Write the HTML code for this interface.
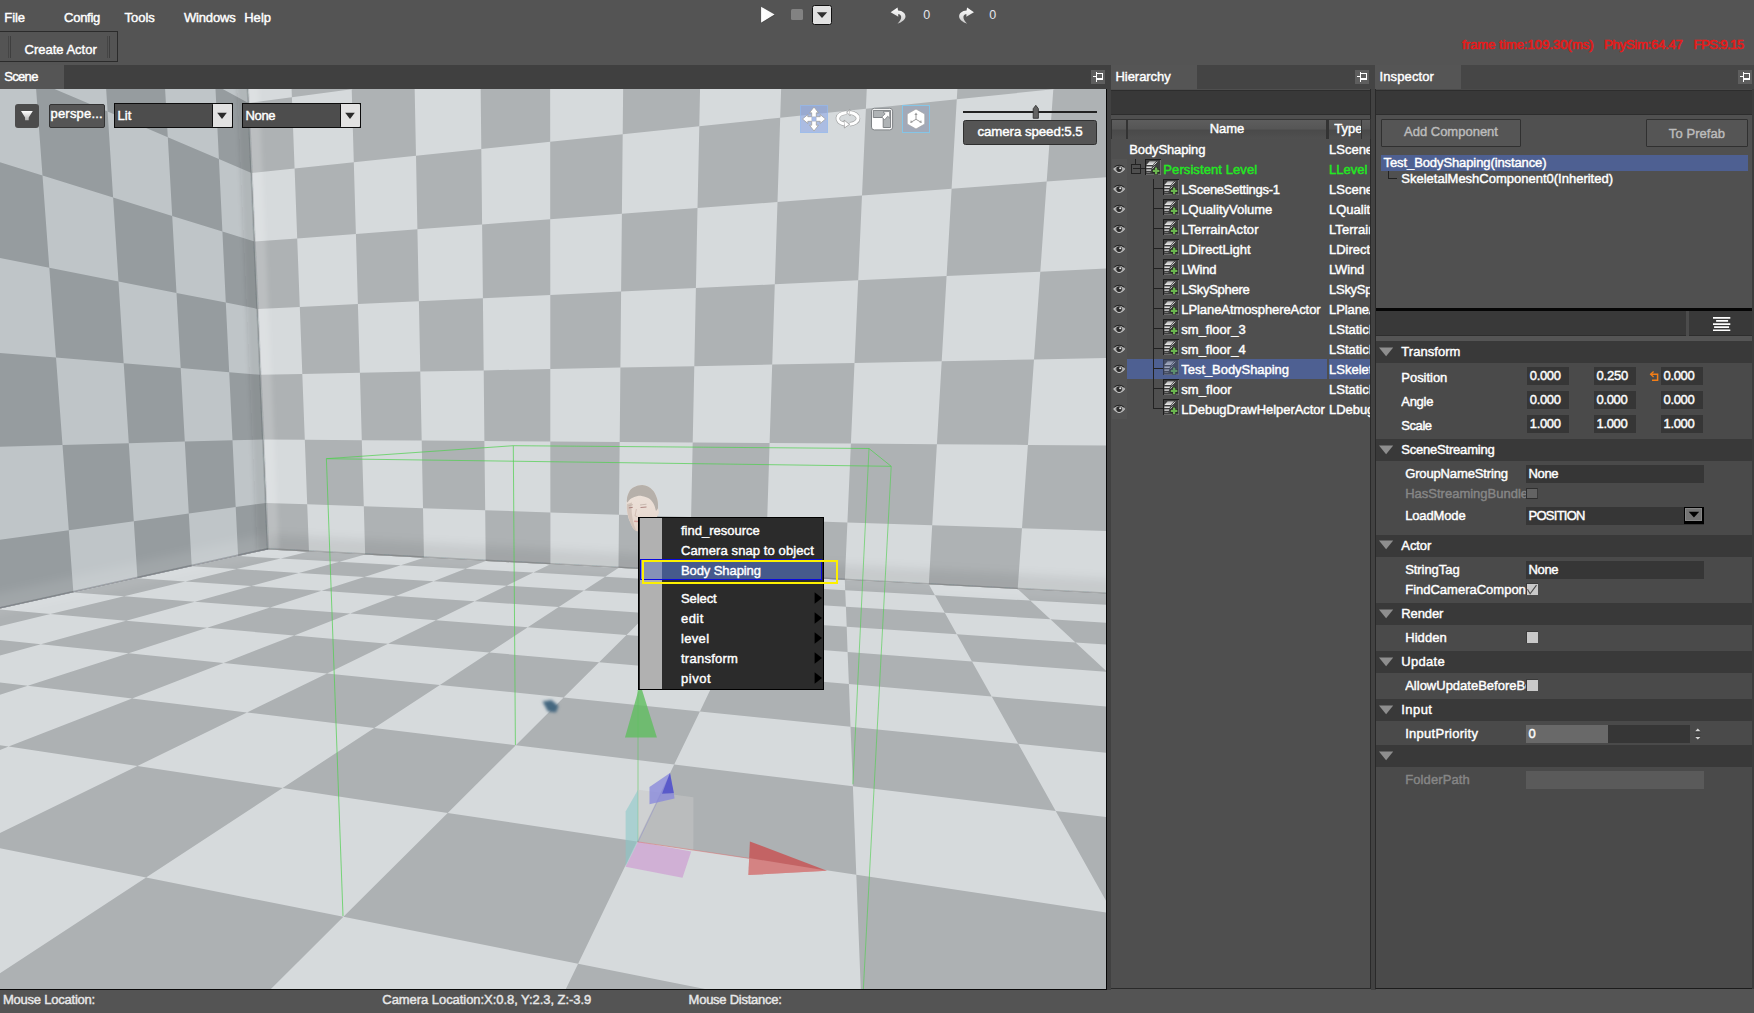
<!DOCTYPE html><html><head><meta charset="utf-8"><title>Editor</title><style>
*{box-sizing:border-box;margin:0;padding:0}
html,body{width:1754px;height:1013px;overflow:hidden;background:#545454}
body{font-family:"Liberation Sans", sans-serif;font-size:13px;position:relative;color:#fff}
div,svg{position:absolute}
.t{white-space:pre;-webkit-text-stroke:0.42px currentColor}
.g{white-space:pre;-webkit-text-stroke:0.3px currentColor}
</style></head><body>
<div class="t" style="left:4.3px;top:7.5px;line-height:20px;height:20px;color:#fff;letter-spacing:-0.11px;">File</div>
<div class="t" style="left:64.1px;top:7.5px;line-height:20px;height:20px;color:#fff;letter-spacing:-0.28px;">Config</div>
<div class="t" style="left:124.5px;top:7.5px;line-height:20px;height:20px;color:#fff;">Tools</div>
<div class="t" style="left:183.9px;top:7.5px;line-height:20px;height:20px;color:#fff;letter-spacing:-0.14px;">Windows</div>
<div class="t" style="left:244.2px;top:7.5px;line-height:20px;height:20px;color:#fff;letter-spacing:0.04px;">Help</div>
<div style="left:-1px;top:31px;width:119px;height:31px;border:1px solid #2b2b2b;"></div>
<div style="left:8px;top:36px;width:1px;height:22px;background:#454545;"></div>
<div style="left:10.4px;top:36px;width:1px;height:22px;background:#3e3e3e;"></div>
<div style="left:107px;top:36px;width:1px;height:22px;background:#454545;"></div>
<div style="left:109.4px;top:36px;width:1px;height:22px;background:#3e3e3e;"></div>
<div class="t" style="left:24.5px;top:39.5px;line-height:20px;height:20px;color:#fff;">Create Actor</div>
<svg style="left:758px;top:4px;" width="20" height="22" viewBox="0 0 20 22"><defs><linearGradient id="gp" x1="0" y1="0" x2="1" y2="0"><stop offset="0" stop-color="#fff"/><stop offset="1" stop-color="#f4f4f4"/></linearGradient></defs><path d="M3.1,2.8L3.1,18.8L16.6,10.6Z" fill="url(#gp)"/><path d="M3.1,18.8L16.6,10.6L16.6,11.4L3.1,19.6Z" fill="#3a3a3a" opacity=".5"/></svg>
<div style="left:791px;top:9px;width:12px;height:11px;background:#828282;border-radius:1.5px"></div>
<div style="left:812px;top:5px;width:19.5px;height:19.5px;background:#e1e1e1;border:1px solid #111;border-radius:2.5px"></div><svg style="left:812px;top:5px;" width="20" height="20" viewBox="0 0 20 20"><path d="M4.8,7.2L15.2,7.2L10,13Z" fill="#2e2e2e"/></svg>
<svg style="left:889.6px;top:6.6px;" width="18" height="18" viewBox="0 0 18 18"><defs><linearGradient id="gu" x1="0" y1="0" x2="0" y2="1"><stop offset="0" stop-color="#fff"/><stop offset="1" stop-color="#c8c8c8"/></linearGradient></defs><path d="M0.66,5.25L7.54,0.52L8.00,3.41C12.59,3.61 15.61,6.23 15.48,9.51C15.34,12.59 11.80,15.21 7.54,16.72C9.97,14.10 11.54,11.80 11.15,9.51C10.75,7.74 9.70,7.21 8.07,7.21L8.33,9.70Z" fill="url(#gu)"/></svg>
<svg style="left:957.6px;top:6.6px;" width="18" height="18" viewBox="0 0 18 18"><g transform="translate(16.6,0) scale(-1,1)"><path d="M0.66,5.25L7.54,0.52L8.00,3.41C12.59,3.61 15.61,6.23 15.48,9.51C15.34,12.59 11.80,15.21 7.54,16.72C9.97,14.10 11.54,11.80 11.15,9.51C10.75,7.74 9.70,7.21 8.07,7.21L8.33,9.70Z" fill="url(#gu)"/></g></svg>
<div class="t" style="left:923.2px;top:4.5px;line-height:20px;height:20px;color:#e6e6ee;font-size:12.5px;-webkit-text-stroke:0;">0</div>
<div class="t" style="left:989.3px;top:4.5px;line-height:20px;height:20px;color:#e6e6ee;font-size:12.5px;-webkit-text-stroke:0;">0</div>
<div class="t" style="left:1461.9px;top:34.5px;line-height:20px;height:20px;color:#e61e1e;letter-spacing:0.04px;text-shadow:0.6px 0 0 #c01818;">frame time:109.30(ms)</div>
<div class="t" style="left:1603.9px;top:34.5px;line-height:20px;height:20px;color:#e61e1e;letter-spacing:-0.19px;text-shadow:0.6px 0 0 #c01818;">PhySim:64.47</div>
<div class="t" style="left:1693.5px;top:34.5px;line-height:20px;height:20px;color:#e61e1e;letter-spacing:-0.53px;text-shadow:0.6px 0 0 #c01818;">FPS:9.15</div>
<div style="left:0px;top:65px;width:1111px;height:24px;background:#404040;"></div>
<div style="left:0px;top:65px;width:64px;height:24px;background:#555;"></div>
<div class="t" style="left:4.3px;top:66.5px;line-height:20px;height:20px;color:#fff;letter-spacing:-0.70px;">Scene</div>
<div style="left:1111px;top:65px;width:264px;height:24px;background:#444;"></div>
<div style="left:1111px;top:65px;width:86px;height:24px;background:#555;"></div>
<div class="t" style="left:1115.5px;top:66.5px;line-height:20px;height:20px;color:#fff;letter-spacing:-0.05px;">Hierarchy</div>
<div style="left:1375px;top:65px;width:379px;height:24px;background:#464646;"></div>
<div style="left:1375px;top:65px;width:86px;height:24px;background:#555;"></div>
<div class="t" style="left:1379.5px;top:66.5px;line-height:20px;height:20px;color:#fff;letter-spacing:0.12px;">Inspector</div>
<svg style="left:1091px;top:70px;" width="14" height="14" viewBox="0 0 14 14"><rect width="14" height="14" fill="#5e5e5e"/><path d="M5,2h1v10h-1zM2,6h3v1h-3zM6,3h6v1h-6zM11,4h1v4h-1zM6,8h6v2h-6z" fill="#fff"/></svg>
<svg style="left:1355px;top:70px;" width="14" height="14" viewBox="0 0 14 14"><rect width="14" height="14" fill="#5e5e5e"/><path d="M5,2h1v10h-1zM2,6h3v1h-3zM6,3h6v1h-6zM11,4h1v4h-1zM6,8h6v2h-6z" fill="#fff"/></svg>
<svg style="left:1738px;top:70px;" width="14" height="14" viewBox="0 0 14 14"><rect width="14" height="14" fill="#5e5e5e"/><path d="M5,2h1v10h-1zM2,6h3v1h-3zM6,3h6v1h-6zM11,4h1v4h-1zM6,8h6v2h-6z" fill="#fff"/></svg>
<svg width="1106" height="900" viewBox="0 89 1106 900" style="position:absolute;left:0;top:89px;display:block">
<defs>
<clipPath id="cb"><path d="M246.9,67.5L1224.1,-78.2L1161,596.6L268,549.4Z"/></clipPath>
<clipPath id="cl"><path d="M-131.6,-274.7L246.9,67.5L268,549.4L-48.2,619.2Z"/></clipPath>
<clipPath id="cf"><path d="M268,549.4L1161,596.6L1200,1100L-100,1100L-48.2,619.2Z"/></clipPath>
<filter id="b6" filterUnits="userSpaceOnUse" x="-100" y="0" width="1400" height="1200"><feGaussianBlur stdDeviation="5"/></filter><filter id="b2" filterUnits="userSpaceOnUse" x="-100" y="0" width="1400" height="1200"><feGaussianBlur stdDeviation="2"/></filter><filter id="b1" filterUnits="userSpaceOnUse" x="-100" y="0" width="1400" height="1200"><feGaussianBlur stdDeviation=".7"/></filter>
</defs>
<g clip-path="url(#cf)"><rect x="0" y="89" width="1106" height="900" fill="#d6dadc"/>
<path fill="#adb1b3" d="M238.1,556L280.7,558.4L236.7,569L191.7,566.3ZM137.5,578.2L185.3,581.5L124.1,596.3L73.4,592.4ZM-3.6,609.3L50.4,614.1L-40.3,636L-97.9,630.1ZM309,551.6L365.2,554.6L339.3,561.7L280.7,558.4ZM236.7,569L298.9,572.9L251.4,586L185.3,581.5ZM124.1,596.3L194.8,601.7L126.1,620.7L50.4,614.1ZM-40.3,636L40.9,644.3L-67.4,674.2L-154.5,663.6ZM339.3,561.7L400.8,565.2L364.4,576.9L298.9,572.9ZM251.4,586L321.5,590.8L270,607.5L194.8,601.7ZM126.1,620.7L207.1,627.8L128.6,653.2L40.9,644.3ZM-67.4,674.2L27.8,685.8L-106.4,729.2L-209.7,713.6ZM424,557.7L485.7,560.9L465.4,568.8L400.8,565.2ZM364.4,576.9L433.6,581.2L395.8,595.9L321.5,590.8ZM270,607.5L350.2,613.6L294.2,635.4L207.1,627.8ZM128.6,653.2L223.6,662.9L132.1,698.5L27.8,685.8ZM-106.4,729.2L8.6,746.6L-167.3,815L-293.7,789.8ZM465.4,568.8L533.4,572.6L506.7,585.7L433.6,581.2ZM395.8,595.9L474.7,601.3L436,620.2L350.2,613.6ZM294.2,635.4L388,643.7L327,673.4L223.6,662.9ZM132.1,698.5L247,712.5L137.4,766L8.6,746.6ZM-167.3,815L-22.2,843.9L-275.6,967.7L-437.7,920.2ZM550.4,564.3L618.4,567.9L605.1,576.7L533.4,572.6ZM506.7,585.7L584,590.5L558.7,607.1L474.7,601.3ZM436,620.2L527.8,627.3L489.3,652.5L388,643.7ZM327,673.4L439.9,684.9L374.2,728L247,712.5ZM137.4,766L282.6,788L146.1,877.5L-22.2,843.9ZM605.1,576.7L680.7,580.9L666,595.6L584,590.5ZM558.7,607.1L648.3,613.2L626.5,634.9L527.8,627.3ZM489.3,652.5L599.1,662.2L563.6,697.5L439.9,684.9ZM374.2,728L515.8,745.2L447.7,812.9L282.6,788ZM146.1,877.5L343.4,916.8L163.1,1096.4L-79.4,1025.2ZM690,571.7L765.3,575.7L760.7,585.4L680.7,580.9ZM666,595.6L753.2,600.9L744.1,619.8L648.3,613.2ZM626.5,634.9L732.8,643.1L718.6,672.6L599.1,662.2ZM563.6,697.5L699.9,711.4L674.2,764.5L515.8,745.2ZM447.7,812.9L637,841.6L578.1,963.7L343.4,916.8ZM760.7,585.4L845.2,590.2L845.9,606.7L753.2,600.9ZM744.1,619.8L846.7,626.8L847.6,651.9L732.8,643.1ZM718.6,672.6L848.9,684.1L850.5,726.8L699.9,711.4ZM674.2,764.5L852.9,786.2L856.3,874.7L637,841.6ZM578.1,963.7L862,1020.3L873,1304.5L470.6,1186.5ZM844.8,579.9L928.8,584.3L934.9,595.2L845.2,590.2ZM845.9,606.7L944.8,612.8L956.8,634.3L846.7,626.8ZM847.6,651.9L972,661.5L991.7,696.6L848.9,684.1ZM850.5,726.8L1018.2,743.8L1055.7,810.9L852.9,786.2ZM856.3,874.7L1113.2,913.5L1212.1,1090.1L862,1020.3ZM934.9,595.2L1030.2,600.6L1050.4,619.3L944.8,612.8ZM956.8,634.3L1075.5,642.5L1107.2,671.9L972,661.5ZM991.7,696.6L1148.8,710.3L1205.7,763L1018.2,743.8ZM1055.7,810.9L1288.2,839.2L1418.4,959.7L1113.2,913.5ZM1017.7,589L1111.8,594L1131.5,606.3L1030.2,600.6ZM1050.4,619.3L1163.6,626.3L1203.5,651.2L1075.5,642.5ZM1107.2,671.9L1254.7,683.2L1322.6,725.6L1148.8,710.3ZM1131.5,606.3L1239.5,612.4L1285.1,633.8L1163.6,626.3Z"/>
<path d="M268,549.4L1161,596.6M268,549.4L-48.2,619.2" stroke="#fff" stroke-opacity=".05" stroke-width="14" fill="none" filter="url(#b2)"/>
</g>
<g clip-path="url(#cb)"><rect x="0" y="89" width="1106" height="900" fill="#d6dadc"/>
<path fill="#aeb2b4" d="M248.4,103L291.9,97.2L294.6,168.5L251.5,173ZM254.5,241.6L297.2,238.4L299.8,306.9L257.5,308.9ZM260.4,374.8L302.3,374L304.8,439.8L263.2,439.5ZM266,502.9L307.2,504.3L309.6,567.6L268.7,565.1ZM289.1,24.4L349.5,14.5L351.7,89.2L291.9,97.2ZM294.6,168.5L353.8,162.3L355.9,233.9L297.2,238.4ZM299.8,306.9L357.9,304.1L359.9,372.8L302.3,374ZM304.8,439.8L361.8,440.2L363.8,506.2L307.2,504.3ZM351.7,89.2L414.5,80.8L416,155.8L353.8,162.3ZM355.9,233.9L417.4,229.3L418.9,301.2L357.9,304.1ZM359.9,372.8L420.3,371.6L421.7,440.6L361.8,440.2ZM363.8,506.2L423,508.2L424.3,574.4L365.6,570.9ZM412.9,4.1L479.7,-6.9L480.5,71.9L414.5,80.8ZM416,155.8L481.3,149L482.1,224.4L417.4,229.3ZM418.9,301.2L482.9,298.2L483.7,370.4L420.3,371.6ZM421.7,440.6L484.4,441L485.2,510.2L423,508.2ZM480.5,71.9L550.1,62.6L550.2,141.8L481.3,149ZM482.1,224.4L550.2,219.2L550.3,295L482.9,298.2ZM483.7,370.4L550.3,369L550.3,441.5L484.4,441ZM485.2,510.2L550.4,512.4L550.4,581.8L485.9,578ZM550.1,-18.4L624.3,-30.6L623.5,52.8L550.1,62.6ZM550.2,141.8L622.7,134.2L621.9,213.8L550.2,219.2ZM550.3,295L621.1,291.6L620.4,367.6L550.3,369ZM550.3,441.5L619.7,442L619,514.7L550.4,512.4ZM623.5,52.8L701,42.4L699.3,126.2L622.7,134.2ZM621.9,213.8L697.5,208.1L695.9,288L621.1,291.6ZM620.4,367.6L694.3,366.2L692.7,442.5L619.7,442ZM619,514.7L691.1,517.1L689.6,590.1L618.3,585.9ZM702.8,-43.5L785.8,-57.2L783,31.4L701,42.4ZM699.3,126.2L780.2,117.7L777.5,202L697.5,208.1ZM695.9,288L774.8,284.3L772.2,364.6L694.3,366.2ZM692.7,442.5L769.6,443L767.2,519.7L691.1,517.1ZM783,31.4L869.8,19.7L865.9,108.8L780.2,117.7ZM777.5,202L862,195.6L858.2,280.3L774.8,284.3ZM772.2,364.6L854.5,363L850.9,443.6L769.6,443ZM767.2,519.7L847.4,522.4L844,599.3L764.7,594.6ZM865.9,108.8L956.8,99.3L951.6,188.8L862,195.6ZM858.2,280.3L946.6,276.1L941.7,361.2L854.5,363ZM850.9,443.6L936.9,444.2L932.2,525.2L847.4,522.4ZM962,7.4L1060.1,-5.8L1053.3,89.2L956.8,99.3ZM951.6,188.8L1046.7,181.6L1040.3,271.7L946.6,276.1ZM941.7,361.2L1034,359.4L1027.9,444.9L936.9,444.2ZM932.2,525.2L1022,528.2L1016.2,609.5L927.7,604.2ZM1053.3,89.2L1156.1,78.4L1147.9,174L1046.7,181.6ZM1040.3,271.7L1139.9,266.9L1132.1,357.4L1034,359.4ZM1027.9,444.9L1124.6,445.5L1117.2,531.4L1022,528.2ZM1164.5,-19.8L1276,-34.7L1265.7,67L1156.1,78.4ZM1147.9,174L1255.7,165.8L1246,261.9L1139.9,266.9ZM1132.1,357.4L1236.5,355.3L1227.3,446.3L1124.6,445.5ZM1117.2,531.4L1218.3,534.8L1209.6,620.9L1110,615Z"/>
<path d="M268,549.4L1161,596.6" stroke="#20282c" stroke-opacity=".07" stroke-width="30" fill="none" filter="url(#b6)"/>
<path d="M268,549.4L1161,596.6" stroke="#20282c" stroke-opacity=".20" stroke-width="2.600" fill="none" filter="url(#b1)"/>
<path d="M246.9,67.5L268,549.4" stroke="#fff" stroke-opacity=".16" stroke-width="22" fill="none" filter="url(#b2)"/>
</g>
<g clip-path="url(#cl)"><rect x="0" y="89" width="1106" height="900" fill="#bfc5c8"/>
<path fill="#969c9f" d="M242.1,-41.3L207.9,-67.9L211.6,9.4L245.3,31.6ZM248.4,103L215.3,85L218.9,159.1L251.5,173ZM254.5,241.6L222.4,231.6L225.8,302.6L257.5,308.9ZM260.4,374.8L229.2,372.2L232.5,440.3L263.2,439.5ZM266,502.9L235.7,507.1L238.9,572.5L268.7,565.1ZM211.6,9.4L158.7,-25.5L163.3,56.8L215.3,85ZM218.9,159.1L167.8,137.3L172.2,216L222.4,231.6ZM225.8,302.6L176.5,292.9L180.7,368.1L229.2,372.2ZM232.5,440.3L184.8,441.6L188.8,513.6L235.7,507.1ZM163.3,56.8L101.9,23.5L107.6,111.6L167.8,137.3ZM172.2,216L113.1,197.6L118.5,281.4L176.5,292.9ZM180.7,368.1L123.7,363.3L128.8,443.2L184.8,441.6ZM188.8,513.6L133.8,521.2L138.7,597.4L192.7,584ZM107.6,111.6L35.5,80.9L42.5,175.6L113.1,197.6ZM118.5,281.4L49.3,267.8L56,357.6L123.7,363.3ZM128.8,443.2L62.5,445L68.8,530.2L133.8,521.2ZM28.3,-16.5L-61.8,-65.4L-52.4,43.4L35.5,80.9ZM42.5,175.6L-43.3,148.9L-34.5,251.3L49.3,267.8ZM56,357.6L-25.9,350.7L-17.6,447.2L62.5,445ZM68.8,530.2L-9.5,541.1L-1.6,632.3L74.9,613.3ZM-52.4,43.4L-161.9,-3.3L-149.9,115.7L-43.3,148.9ZM-34.5,251.3L-138.2,230.8L-127,342.2L-25.9,350.7ZM-17.6,447.2L-116.1,450L-105.5,554.4L-9.5,541.1Z"/>
<path d="M268,549.4L-48.2,619.2" stroke="#fff" stroke-opacity=".10" stroke-width="30" fill="none" filter="url(#b6)"/>
<path d="M268,549.4L-48.2,619.2" stroke="#20282c" stroke-opacity=".25" stroke-width="3" fill="none" filter="url(#b1)"/>
<path d="M246.9,67.5L268,549.4" stroke="#24282a" stroke-opacity=".10" stroke-width="22" fill="none" filter="url(#b2)"/>
</g>
<path d="M246.9,67.5L268,549.4" stroke="#30383c" stroke-opacity=".16" stroke-width="2.400" fill="none" filter="url(#b1)"/>
<g stroke="#4fcf4f" stroke-width=".9" fill="none" stroke-opacity=".8"><path d="M326.4,458.7L513.3,445.7L869,448.5L891.2,466.3L326.4,458.7"/><path d="M326.4,458.7L343,916"/><path d="M513.3,445.7L515.4,745"/><path d="M869,448.5L852.900,784.300" stroke-opacity=".7"/><path d="M891.2,466.3L863.200,992" stroke-opacity=".7"/></g><defs><filter id="bl1" x="-50%" y="-50%" width="200%" height="200%"><feGaussianBlur stdDeviation="1.700"/></filter><filter id="bl2" x="-50%" y="-50%" width="200%" height="200%"><feGaussianBlur stdDeviation=".45"/></filter><linearGradient id="hd" x1="0" y1="0" x2="0" y2="1"><stop offset="0" stop-color="#ece2da"/><stop offset=".6" stop-color="#eadcd3"/><stop offset="1" stop-color="#e0cfc5"/></linearGradient></defs><path d="M542.500,701.500l9,-1.500l7,6l-2.500,6.500l-8,-1z" fill="#456880" filter="url(#bl1)"/><g filter="url(#bl2)"><path d="M642.200,484.900C636,485 631.500,488 629.700,490.700C627.800,494 627,497 627,499C626.500,502 626.400,504 626.600,505.900C626.400,509 626.900,512 627.600,514.200C628.200,518 629.200,520.500 630.400,522.500C631.600,526 633,528.500 634.600,530.100C636,531.200 637.500,531.600 639,531.400L645,531L655.300,520L657.600,515.500C658.800,514 659,512.500 658.700,511.500C658.600,510 658.300,509 658,508C658.200,504 657.800,500.500 656.700,497.600C655.800,494.500 654.500,492 652.500,490C650,487 646.500,485 642.200,484.900Z" fill="url(#hd)"/><path d="M642.200,484.900C636,485 631.500,488 629.700,490.700C627.800,494 627,497 627,499C626.600,501 626.700,502 627.600,502.500C629,500 631,498.500 633.200,497.600C636,496.200 639,495.700 641.500,495.900C645,496.300 648,497.500 649.800,499C652,501 653.600,503.500 654.600,505.900C655.200,508 655.600,509.500 656,511C657,510 657.800,509 658,508C658.200,504 657.800,500.500 656.700,497.600C655.800,494.500 654.500,492 652.500,490C650,487 646.500,485 642.200,484.900Z" fill="#b6b0aa"/><path d="M627,504C626.500,509 627.500,516 630.400,522.500C631.600,526 633,528.500 634.600,530.100L636.500,531.300C634.500,527 633,522 632.300,517C631.500,512 631.300,507 632,502.500Z" fill="#cdbdb3" opacity=".8"/><path d="M628.800,507.900l4,-.6M640.500,507.500l6,-.5" stroke="#9a6a66" stroke-width="1" opacity=".75"/><path d="M628.500,505.600l4.500,-.9M640,505l6.500,-.8" stroke="#b4a49a" stroke-width=".8" opacity=".8"/><path d="M634.200,521.200l4,.3" stroke="#d09490" stroke-width="1.400" opacity=".85"/><path d="M636.400,509l-1.400,7l2.200,.6" stroke="#cdb8ad" stroke-width=".8" fill="none"/></g><path d="M638,690V842" stroke="#58c858" stroke-width="1" stroke-opacity=".55"/><path d="M640.2,684L625,737.600H656.900Z" fill="#5fbe5f" fill-opacity=".8"/><path d="M638,789.700L693.400,797.300V850.500L638,841.800Z" fill="#c8c8c8" fill-opacity=".5"/><path d="M638,789.700L625.600,811.400V866.800L638,841.800Z" fill="#86c8c8" fill-opacity=".55"/><path d="M638,841.800L691.200,851.600L682.500,877.700L625.600,866.800Z" fill="#cfa8d4" fill-opacity=".85"/><path d="M670,775L638,842" stroke="#7070d8" stroke-width="1" stroke-opacity=".3"/><path d="M637.300,841.800L749.500,858.400" stroke="#e06060" stroke-width="1" stroke-opacity=".45"/><path d="M670,773L649.500,786.900V804.200L674.500,798.400L673.800,793Z" fill="#8686dc" fill-opacity=".75"/><path d="M670,773L662,793.800L673.800,793Z" fill="#4c4cc8" fill-opacity=".8"/><path d="M749.900,841.400L827,870.700L748.400,875Z" fill="#c85050" fill-opacity=".8"/><path d="M749.200,858L827,870.700L748.400,875Z" fill="#e0a0a0" fill-opacity=".45"/>
</svg>
<div style="left:1106px;top:89px;width:1px;height:900.5px;background:#060606;"></div>
<div style="left:1107px;top:89px;width:4px;height:900.5px;background:#414141;"></div>
<div style="left:0px;top:988.7px;width:1107px;height:1px;background:#0a0a0a;"></div>
<div style="left:15.2px;top:104px;width:24px;height:24px;background:#4c4c4c;border-radius:3px"></div><svg style="left:15.2px;top:104px;" width="24" height="24" viewBox="0 0 24 24"><defs><linearGradient id="gf" x1="0" y1="0" x2="0" y2="1"><stop offset="0" stop-color="#fff"/><stop offset="1" stop-color="#b4b4b4"/></linearGradient></defs><path d="M6,7h11.800l-4.100,6.600v2.600h-3.600v-2.600z" fill="url(#gf)"/></svg><div style="left:49.2px;top:104.4px;width:56px;height:23.6px;background:#555;border:1px solid #333;border-radius:2px"></div><div class="t" style="left:50.5px;top:103.5px;line-height:20px;color:#fff;letter-spacing:.2px;">perspe...</div><div style="left:114px;top:103px;width:119px;height:25px;background:#4d4d4d;border:1px solid #0c0c0c"></div><div style="left:212px;top:104px;width:20px;height:23px;background:#e2e2e2;border-left:1px solid #111;border-radius:1px"></div><svg style="left:212px;top:104px;" width="20" height="23" viewBox="0 0 20 23"><path d="M5.2,8.7h9.600l-4.800,6.400z" fill="#2a2a2a"/></svg><div class="t" style="left:117.5px;top:104.2px;line-height:23px;color:#fff;letter-spacing:0.12px;">Lit</div><div style="left:242px;top:103px;width:119px;height:25px;background:#4d4d4d;border:1px solid #0c0c0c"></div><div style="left:340px;top:104px;width:20px;height:23px;background:#e2e2e2;border-left:1px solid #111;border-radius:1px"></div><svg style="left:340px;top:104px;" width="20" height="23" viewBox="0 0 20 23"><path d="M5.2,8.7h9.600l-4.800,6.400z" fill="#2a2a2a"/></svg><div class="t" style="left:245.5px;top:104.2px;line-height:23px;color:#fff;letter-spacing:-0.37px;">None</div><div style="left:800px;top:105px;width:28px;height:28px;background:rgba(136,164,232,.55);border:1px solid rgba(150,190,240,.55)"></div><svg style="left:800px;top:105px;" width="28" height="28" viewBox="0 0 28 28"><path d="M14,2L18.500,7.800H16.300V11.700H20.200V9.500L25.500,14L20.200,18.500V16.300H16.300V20.200H18.500L14,26L9.500,20.200H11.700V16.300H7.800V18.500L2.500,14L7.800,9.500V11.700H11.700V7.800H9.500Z" fill="#fff" stroke="#a0a0a0" stroke-width=".8" stroke-linejoin="round"/><rect x="11.900" y="11.900" width="4.200" height="4.200" fill="#a9bde9" stroke="#9aa6c0" stroke-width=".5"/></svg><svg style="left:834px;top:105px;" width="28" height="28" viewBox="0 0 28 28"><g fill="none" stroke="#8c8c8c" stroke-opacity=".75" stroke-width="4.400"><path d="M12.500,7.600A9.900,5.900 0 0 0 10.300,19"/><path d="M16,19.200A9.900,5.900 0 0 0 16,7.600"/></g><g fill="#fff" stroke="#8c8c8c" stroke-opacity=".75" stroke-width=".9" stroke-linejoin="round"><path d="M15.800,4.500L12.900,7.400L16.100,10.800Z"/><path d="M10.100,15.100L15.500,19.400L10.400,23Z"/></g><g fill="none" stroke="#fff" stroke-width="3.100"><path d="M12.500,7.600A9.900,5.900 0 0 0 10.300,19"/><path d="M16,19.200A9.900,5.900 0 0 0 16,7.600"/></g></svg><svg style="left:869px;top:106px;" width="26" height="26" viewBox="0 0 26 26"><rect x="2.5" y="2.3" width="21.100" height="21.600" rx="2.800" fill="#fff" stroke="#7e8285" stroke-width="1"/><path d="M4.3,4.4L21.6,4.4L21.6,21.5L14.2,21.5L14.2,11.5L4.3,11.5Z" fill="#afb3b5" stroke="#7e8285" stroke-width="1" stroke-linejoin="round"/><path d="M20.6,5.5L20.8,12.2L18.7,10.2L15.7,13.8L12.8,11.0L16.2,7.8L14.0,5.8Z" fill="#fff" stroke="#7e8285" stroke-width=".8" stroke-linejoin="round"/></svg><div style="left:902px;top:105px;width:28px;height:28px;background:rgba(150,160,188,.5);border:1px solid rgba(130,200,235,.9)"></div><svg style="left:902px;top:105px;" width="28" height="28" viewBox="0 0 28 28"><path d="M14,4l8.800,5v10l-8.800,5l-8.800,-5v-10z" fill="#fff" stroke="#a0a0a0" stroke-width=".7"/><g stroke="#9a9a9a" stroke-width="1" fill="none"><path d="M14,14.300v-5.300M14,14.300l-4.600,2.700M14,14.300l4.600,2.700"/></g><g fill="#9a9a9a"><path d="M14,7.400l1.600,2.500h-3.200z"/><path d="M8.200,18l.7,-2.900l1.700,2.500z"/><path d="M19.800,18l-.7,-2.900l-1.700,2.500z"/></g></svg><div style="left:963px;top:111px;width:134px;height:2px;background:#222"></div><svg style="left:1031px;top:103px;" width="10" height="17" viewBox="0 0 10 17"><path d="M2.2,15.3v-9.6l2.6,-3.4l2.6,3.4v9.6z" fill="#626262" stroke="#2a2a2a" stroke-width=".8"/></svg><div style="left:963px;top:120px;width:134px;height:25px;background:#555;border:1px solid #2f2f2f;border-radius:2.5px"></div><div class="t" style="left:963px;top:121px;width:134px;text-align:center;line-height:22px;color:#fff;font-size:13.3px;letter-spacing:-.08px;-webkit-text-stroke:.45px #fff">camera speed:5.5</div><div style="left:638.4px;top:516.8px;width:185.6px;height:173px;background:#2b2b2b;border:1.2px solid #000"></div><div style="left:640px;top:518.3px;width:22.2px;height:170.3px;background:#b1b1b1"></div><div style="left:640.4px;top:559.4px;width:182px;height:21px;background:#465a8c;border:1px solid #0a0adc"></div><div style="left:641.4px;top:560.4px;width:20.8px;height:19px;background:#8591b7"></div><div style="left:642.2px;top:560px;width:195.6px;height:24.4px;border:2px solid #fdf000"></div><div class="t" style="left:681px;top:521.0px;line-height:20px;color:#fff;">find_resource</div><div class="t" style="left:681px;top:541.0px;line-height:20px;color:#fff;letter-spacing:0.10px;">Camera snap to object</div><div class="t" style="left:681px;top:561.0px;line-height:20px;color:#fff;letter-spacing:-0.09px;">Body Shaping</div><div class="t" style="left:681px;top:588.8px;line-height:20px;color:#fff;letter-spacing:-0.09px;">Select</div><svg style="left:814px;top:591.4px;" width="9" height="14" viewBox="0 0 9 14"><path d="M.6,1.2l7.4,5.8l-7.4,5.8z" fill="#000"/></svg><div class="t" style="left:681px;top:608.8px;line-height:20px;color:#fff;letter-spacing:0.43px;">edit</div><svg style="left:814px;top:611.4px;" width="9" height="14" viewBox="0 0 9 14"><path d="M.6,1.2l7.4,5.8l-7.4,5.8z" fill="#000"/></svg><div class="t" style="left:681px;top:628.8px;line-height:20px;color:#fff;letter-spacing:0.33px;">level</div><svg style="left:814px;top:631.4px;" width="9" height="14" viewBox="0 0 9 14"><path d="M.6,1.2l7.4,5.8l-7.4,5.8z" fill="#000"/></svg><div class="t" style="left:681px;top:648.8px;line-height:20px;color:#fff;letter-spacing:0.25px;">transform</div><svg style="left:814px;top:651.4px;" width="9" height="14" viewBox="0 0 9 14"><path d="M.6,1.2l7.4,5.8l-7.4,5.8z" fill="#000"/></svg><div class="t" style="left:681px;top:668.8px;line-height:20px;color:#fff;letter-spacing:0.51px;">pivot</div><svg style="left:814px;top:671.4px;" width="9" height="14" viewBox="0 0 9 14"><path d="M.6,1.2l7.4,5.8l-7.4,5.8z" fill="#000"/></svg>
<div style="left:1111.0px;top:89px;width:259.7px;height:900.3px;background:#4f4f4f;border-bottom:1px solid #2a2a2a;border-right:1px solid #2a2a2a"></div><div style="left:1111.0px;top:90px;width:259.3px;height:25px;background:#383838;border-top:1.5px solid #2d2d2d;border-bottom:1.5px solid #2d2d2d"></div><div style="left:1111.0px;top:118.5px;width:259.5px;height:20.5px;background:#333"></div><div style="left:1112.2px;top:119.5px;width:14px;height:19px;background:linear-gradient(#5d5d5d 0,#565656 45%,#4a4a4a 55%,#505050 100%)"></div><div style="left:1127.8px;top:119.5px;width:198.4px;height:19px;background:linear-gradient(#5d5d5d 0,#565656 45%,#4a4a4a 55%,#505050 100%)"></div><div style="left:1328.8px;top:119.5px;width:32.6px;height:19px;background:linear-gradient(#5d5d5d 0,#565656 45%,#4a4a4a 55%,#505050 100%)"></div><div style="left:1362.2px;top:119.5px;width:8px;height:19px;background:linear-gradient(#5d5d5d 0,#565656 45%,#4a4a4a 55%,#505050 100%)"></div><div class="t" style="left:1127.8px;top:119px;line-height:20px;color:#fff;width:198.4px;text-align:center;">Name</div><div class="t" style="left:1334.3px;top:118.6px;line-height:20px;color:#fff;width:27px;overflow:hidden;">Type</div><svg width="0" height="0" style="left:0;top:0"><defs>
<linearGradient id="gl" x1="0" y1="0" x2="0" y2="1"><stop offset="0" stop-color="#a8a8a8"/><stop offset="1" stop-color="#f2f2f2"/></linearGradient>
<pattern id="ck" width="2" height="2" patternUnits="userSpaceOnUse"><rect width="1" height="1" fill="#fff"/><rect x="1" y="1" width="1" height="1" fill="#fff"/></pattern>
<g id="ly"><rect width="16" height="16" fill="#3e3e3e"/><path d="M0,0h16v1h-15v15h-1z" fill="#1c1c1c"/><path d="M15.2,1v14.2h-14.2v.8h15v-15z" fill="#7a7a7a"/>
<path d="M4.6,2.2h6.6l-3.4,3.9h-6.4z" fill="url(#gl)"/><path d="M1.4,7.3h6l-.9,1.6h-5.1z" fill="url(#gl)"/><path d="M1.4,10.3h5l-.6,1.5h-4.4z" fill="url(#gl)"/><path d="M1.6,13h3.8v.8h-3.8z" fill="#888"/>
<path d="M11.200,2.200h1.400l-4.400,7.400h-1.400z" fill="url(#ck)" opacity=".8"/>
<path d="M9.3,8h3.6v2.100h2.100v3.600h-2.100v2.100h-3.600v-2.100h-2.100v-3.600h2.100z" fill="#1a1a1a" opacity=".8"/><path d="M9.9,8.600h2.400v2.100h2.100v2.400h-2.100v2.100h-2.400v-2.100h-2.100v-2.400h2.100z" fill="#6cb650"/></g>
<g id="ey"><path d="M.2,5C2.200,2.400 4.400,1.600 6.200,1.600S10.200,2.400 12.200,5C10.200,7.900 7.800,9 6.200,9S2.200,7.900 .2,5z" fill="#c4c4c4"/><path d="M1.300,5C2.800,3.300 4.600,2.600 6.200,2.600S9.600,3.300 11.100,5C9.600,6.900 7.800,7.900 6.200,7.900S2.800,6.900 1.300,5z" fill="#a0a0a0"/><circle cx="6.100" cy="5.100" r="2.800" fill="#2c2c2c"/><circle cx="7.200" cy="4.300" r="1" fill="#e8e8e8"/><path d="M1.700,3C3.700,.7 8.700,.7 10.700,3" stroke="#262626" stroke-width="1.100" fill="none" stroke-linecap="round"/></g>
</defs></svg><div style="left:1111.5px;top:159px;width:15.500px;height:260px;background:#535353"></div><div class="t" style="left:1129.3px;top:139.9px;line-height:20px;color:#fff;letter-spacing:-0.12px;width:197.0px;overflow:hidden;">BodyShaping</div><div class="t" style="left:1329px;top:139.9px;line-height:20px;color:#fff;width:41.3px;overflow:hidden;">LScene</div><svg style="left:1112.800px;top:163.8px" width="13" height="10"><use href="#ey"/></svg><div style="left:1135.3px;top:159px;width:1px;height:5px;background:#222"></div><div style="left:1131px;top:164px;width:10px;height:10px;border:1px solid #222"></div><div style="left:1133px;top:168px;width:12px;height:1px;background:#222"></div><svg style="left:1145px;top:159.2px" width="16" height="16"><use href="#ly"/></svg><div class="t" style="left:1163.3px;top:159.9px;line-height:20px;color:#22ea22;letter-spacing:0.09px;width:163.0px;overflow:hidden;">Persistent Level</div><div class="t" style="left:1329px;top:159.9px;line-height:20px;color:#22ea22;width:41.3px;overflow:hidden;">LLevel</div><svg style="left:1112.800px;top:183.8px" width="13" height="10"><use href="#ey"/></svg><div style="left:1153px;top:179px;width:1px;height:20px;background:#222"></div><div style="left:1153px;top:188px;width:10px;height:1px;background:#222"></div><svg style="left:1163px;top:179.2px" width="16" height="16"><use href="#ly"/></svg><div class="t" style="left:1181.3px;top:179.9px;line-height:20px;color:#fff;letter-spacing:-0.26px;width:145.0px;overflow:hidden;">LSceneSettings-1</div><div class="t" style="left:1329px;top:179.9px;line-height:20px;color:#fff;width:41.3px;overflow:hidden;">LSceneSettings</div><svg style="left:1112.800px;top:203.8px" width="13" height="10"><use href="#ey"/></svg><div style="left:1153px;top:199px;width:1px;height:20px;background:#222"></div><div style="left:1153px;top:208px;width:10px;height:1px;background:#222"></div><svg style="left:1163px;top:199.2px" width="16" height="16"><use href="#ly"/></svg><div class="t" style="left:1181.3px;top:199.9px;line-height:20px;color:#fff;width:145.0px;overflow:hidden;">LQualityVolume</div><div class="t" style="left:1329px;top:199.9px;line-height:20px;color:#fff;width:41.3px;overflow:hidden;">LQualityVolume</div><svg style="left:1112.800px;top:223.8px" width="13" height="10"><use href="#ey"/></svg><div style="left:1153px;top:219px;width:1px;height:20px;background:#222"></div><div style="left:1153px;top:228px;width:10px;height:1px;background:#222"></div><svg style="left:1163px;top:219.2px" width="16" height="16"><use href="#ly"/></svg><div class="t" style="left:1181.3px;top:219.9px;line-height:20px;color:#fff;letter-spacing:0.07px;width:145.0px;overflow:hidden;">LTerrainActor</div><div class="t" style="left:1329px;top:219.9px;line-height:20px;color:#fff;letter-spacing:0.07px;width:41.3px;overflow:hidden;">LTerrainActor</div><svg style="left:1112.800px;top:243.8px" width="13" height="10"><use href="#ey"/></svg><div style="left:1153px;top:239px;width:1px;height:20px;background:#222"></div><div style="left:1153px;top:248px;width:10px;height:1px;background:#222"></div><svg style="left:1163px;top:239.2px" width="16" height="16"><use href="#ly"/></svg><div class="t" style="left:1181.3px;top:239.9px;line-height:20px;color:#fff;width:145.0px;overflow:hidden;">LDirectLight</div><div class="t" style="left:1329px;top:239.9px;line-height:20px;color:#fff;width:41.3px;overflow:hidden;">LDirectLight</div><svg style="left:1112.800px;top:263.8px" width="13" height="10"><use href="#ey"/></svg><div style="left:1153px;top:259px;width:1px;height:20px;background:#222"></div><div style="left:1153px;top:268px;width:10px;height:1px;background:#222"></div><svg style="left:1163px;top:259.2px" width="16" height="16"><use href="#ly"/></svg><div class="t" style="left:1181.3px;top:259.9px;line-height:20px;color:#fff;letter-spacing:-0.18px;width:145.0px;overflow:hidden;">LWind</div><div class="t" style="left:1329px;top:259.9px;line-height:20px;color:#fff;letter-spacing:-0.18px;width:41.3px;overflow:hidden;">LWind</div><svg style="left:1112.800px;top:283.8px" width="13" height="10"><use href="#ey"/></svg><div style="left:1153px;top:279px;width:1px;height:20px;background:#222"></div><div style="left:1153px;top:288px;width:10px;height:1px;background:#222"></div><svg style="left:1163px;top:279.2px" width="16" height="16"><use href="#ly"/></svg><div class="t" style="left:1181.3px;top:279.9px;line-height:20px;color:#fff;letter-spacing:-0.26px;width:145.0px;overflow:hidden;">LSkySphere</div><div class="t" style="left:1329px;top:279.9px;line-height:20px;color:#fff;letter-spacing:-0.26px;width:41.3px;overflow:hidden;">LSkySphere</div><svg style="left:1112.800px;top:303.8px" width="13" height="10"><use href="#ey"/></svg><div style="left:1153px;top:299px;width:1px;height:20px;background:#222"></div><div style="left:1153px;top:308px;width:10px;height:1px;background:#222"></div><svg style="left:1163px;top:299.2px" width="16" height="16"><use href="#ly"/></svg><div class="t" style="left:1181.3px;top:299.9px;line-height:20px;color:#fff;letter-spacing:-0.08px;width:145.0px;overflow:hidden;">LPlaneAtmosphereActor</div><div class="t" style="left:1329px;top:299.9px;line-height:20px;color:#fff;letter-spacing:-0.08px;width:41.3px;overflow:hidden;">LPlaneAtmosphereActor</div><svg style="left:1112.800px;top:323.8px" width="13" height="10"><use href="#ey"/></svg><div style="left:1153px;top:319px;width:1px;height:20px;background:#222"></div><div style="left:1153px;top:328px;width:10px;height:1px;background:#222"></div><svg style="left:1163px;top:319.2px" width="16" height="16"><use href="#ly"/></svg><div class="t" style="left:1181.3px;top:319.9px;line-height:20px;color:#fff;width:145.0px;overflow:hidden;">sm_floor_3</div><div class="t" style="left:1329px;top:319.9px;line-height:20px;color:#fff;width:41.3px;overflow:hidden;">LStaticMeshActor</div><svg style="left:1112.800px;top:343.8px" width="13" height="10"><use href="#ey"/></svg><div style="left:1153px;top:339px;width:1px;height:20px;background:#222"></div><div style="left:1153px;top:348px;width:10px;height:1px;background:#222"></div><svg style="left:1163px;top:339.2px" width="16" height="16"><use href="#ly"/></svg><div class="t" style="left:1181.3px;top:339.9px;line-height:20px;color:#fff;width:145.0px;overflow:hidden;">sm_floor_4</div><div class="t" style="left:1329px;top:339.9px;line-height:20px;color:#fff;width:41.3px;overflow:hidden;">LStaticMeshActor</div><div style="left:1127px;top:359px;width:199.5px;height:19.6px;background:#4e6092"></div><div style="left:1328.8px;top:359px;width:41.6px;height:19.6px;background:#4e6092"></div><svg style="left:1112.800px;top:363.8px" width="13" height="10"><use href="#ey"/></svg><div style="left:1153px;top:359px;width:1px;height:20px;background:#222"></div><div style="left:1153px;top:368px;width:10px;height:1px;background:#222"></div><svg style="left:1163px;top:359.2px" width="16" height="16" opacity=".55"><use href="#ly"/></svg><div class="t" style="left:1181.3px;top:359.9px;line-height:20px;color:#fff;letter-spacing:-0.05px;width:145.0px;overflow:hidden;">Test_BodyShaping</div><div class="t" style="left:1329px;top:359.9px;line-height:20px;color:#fff;width:41.3px;overflow:hidden;">LSkeletalMeshActor</div><svg style="left:1112.800px;top:383.8px" width="13" height="10"><use href="#ey"/></svg><div style="left:1153px;top:379px;width:1px;height:20px;background:#222"></div><div style="left:1153px;top:388px;width:10px;height:1px;background:#222"></div><svg style="left:1163px;top:379.2px" width="16" height="16"><use href="#ly"/></svg><div class="t" style="left:1181.3px;top:379.9px;line-height:20px;color:#fff;letter-spacing:0.06px;width:145.0px;overflow:hidden;">sm_floor</div><div class="t" style="left:1329px;top:379.9px;line-height:20px;color:#fff;width:41.3px;overflow:hidden;">LStaticMeshActor</div><svg style="left:1112.800px;top:403.8px" width="13" height="10"><use href="#ey"/></svg><div style="left:1153px;top:399px;width:1px;height:10px;background:#222"></div><div style="left:1153px;top:408px;width:10px;height:1px;background:#222"></div><svg style="left:1163px;top:399.2px" width="16" height="16"><use href="#ly"/></svg><div class="t" style="left:1181.3px;top:399.9px;line-height:20px;color:#fff;letter-spacing:-0.05px;width:145.0px;overflow:hidden;">LDebugDrawHelperActor</div><div class="t" style="left:1329px;top:399.9px;line-height:20px;color:#fff;letter-spacing:-0.05px;width:41.3px;overflow:hidden;">LDebugDrawHelperActor</div>
<div style="left:1370.8px;top:89px;width:5px;height:900.5px;background:#424242"></div><div style="left:1375.3px;top:89px;width:377px;height:900px;background:#4a4a4a;border-left:1px solid #2a2a2a;border-bottom:1.5px solid #1c1c1c"></div><div style="left:1752.3px;top:89px;width:2px;height:900px;background:#3c3c3c"></div><div style="left:1376.3px;top:90px;width:376px;height:24.5px;background:#383838;border-top:1.5px solid #2d2d2d;border-bottom:1.5px solid #2d2d2d"></div><div style="left:1376.3px;top:114.5px;width:376px;height:193.5px;background:#505050"></div><div style="left:1381.4px;top:118.6px;width:139.2px;height:28.6px;background:#555;border:1px solid #303030;border-radius:1px"></div><div class="t" style="left:1381.4px;top:121.8px;line-height:20px;color:#bcbcbc;width:139.2px;text-align:center;">Add Component</div><div style="left:1646.3px;top:118.6px;width:101.4px;height:28.6px;background:#555;border:1px solid #303030;border-radius:1px"></div><div class="t" style="left:1646.3px;top:124.1px;line-height:20px;color:#bcbcbc;letter-spacing:0.07px;width:101.4px;text-align:center;">To Prefab</div><div style="left:1381px;top:155.4px;width:367px;height:15.4px;background:#4e6092"></div><div class="t" style="left:1383.6px;top:152.9px;line-height:20px;color:#fff;letter-spacing:-0.10px;">Test_BodyShaping(instance)</div><div style="left:1388px;top:171px;width:1px;height:7.5px;background:#222"></div><div style="left:1388px;top:178px;width:9px;height:1px;background:#222"></div><div class="t" style="left:1401.3px;top:168.9px;line-height:20px;color:#fff;">SkeletalMeshComponent0(Inherited)</div><div style="left:1376.3px;top:308px;width:376px;height:3px;background:#060606"></div><div style="left:1376.3px;top:311px;width:376px;height:24.6px;background:#393939;border-bottom:1px solid #2e2e2e"></div><div style="left:1686.4px;top:311px;width:2.8px;height:25.6px;background:#4c4c4c"></div><svg style="left:1712.9px;top:317px;" width="18" height="16" viewBox="0 0 18 16"><path d="M0,0h17.300v1.700h-17.300zM3.100,3.100h12v1.700h-12zM0,6.200h17.300v1.700h-17.300zM1.100,9.300h15v1.700h-15zM0,12.400h17.300v1.700h-17.300z" fill="#fff"/></svg><div style="left:1376.3px;top:335.6px;width:376px;height:5.4px;background:#555"></div><div style="left:1376.3px;top:341px;width:376px;height:22px;background:#393939"></div><svg style="left:1379px;top:346.5px;" width="15" height="10" viewBox="0 0 15 10"><path d="M0,.6h14.200l-7.100,8.700z" fill="#8e8e8e"/></svg><div class="t" style="left:1401.3px;top:342px;line-height:20px;color:#fff;letter-spacing:0.04px;">Transform</div><div class="t" style="left:1401.3px;top:367.7px;line-height:20px;color:#fff;letter-spacing:-0.03px;width:120.8px;overflow:hidden;">Position</div><div style="left:1527.3px;top:367.0px;width:41.6px;height:17.6px;background:#363636"></div><div class="t" style="left:1529.8px;top:365.6px;line-height:20px;color:#fff;letter-spacing:-0.35px;">0.000</div><div style="left:1594px;top:367.0px;width:41.6px;height:17.6px;background:#363636"></div><div class="t" style="left:1596.5px;top:365.6px;line-height:20px;color:#fff;letter-spacing:-0.21px;">0.250</div><div style="left:1661.1px;top:367.0px;width:41.6px;height:17.6px;background:#363636"></div><div class="t" style="left:1663.6px;top:365.6px;line-height:20px;color:#fff;letter-spacing:-0.35px;">0.000</div><div class="t" style="left:1401.3px;top:391.7px;line-height:20px;color:#fff;letter-spacing:-0.29px;width:120.8px;overflow:hidden;">Angle</div><div style="left:1527.3px;top:391.0px;width:41.6px;height:17.6px;background:#363636"></div><div class="t" style="left:1529.8px;top:389.6px;line-height:20px;color:#fff;letter-spacing:-0.35px;">0.000</div><div style="left:1594px;top:391.0px;width:41.6px;height:17.6px;background:#363636"></div><div class="t" style="left:1596.5px;top:389.6px;line-height:20px;color:#fff;letter-spacing:-0.35px;">0.000</div><div style="left:1661.1px;top:391.0px;width:41.6px;height:17.6px;background:#363636"></div><div class="t" style="left:1663.6px;top:389.6px;line-height:20px;color:#fff;letter-spacing:-0.35px;">0.000</div><div class="t" style="left:1401.3px;top:415.7px;line-height:20px;color:#fff;letter-spacing:-0.43px;width:120.8px;overflow:hidden;">Scale</div><div style="left:1527.3px;top:415.0px;width:41.6px;height:17.6px;background:#363636"></div><div class="t" style="left:1529.8px;top:413.6px;line-height:20px;color:#fff;letter-spacing:-0.35px;">1.000</div><div style="left:1594px;top:415.0px;width:41.6px;height:17.6px;background:#363636"></div><div class="t" style="left:1596.5px;top:413.6px;line-height:20px;color:#fff;letter-spacing:-0.35px;">1.000</div><div style="left:1661.1px;top:415.0px;width:41.6px;height:17.6px;background:#363636"></div><div class="t" style="left:1663.6px;top:413.6px;line-height:20px;color:#fff;letter-spacing:-0.35px;">1.000</div><svg style="left:1649px;top:370px;" width="11" height="12" viewBox="0 0 11 12"><path d="M3,10.300h5.600v-6h-6.800" fill="none" stroke="#f47e16" stroke-width="1.500"/><path d="M4.600,1.500l-3,2.800l3,2.800" fill="none" stroke="#f47e16" stroke-width="1.300"/></svg><div style="left:1376.3px;top:439px;width:376px;height:22px;background:#393939"></div><svg style="left:1379px;top:444.5px;" width="15" height="10" viewBox="0 0 15 10"><path d="M0,.6h14.200l-7.100,8.700z" fill="#8e8e8e"/></svg><div class="t" style="left:1401.3px;top:440px;line-height:20px;color:#fff;letter-spacing:-0.21px;">SceneStreaming</div><div class="t" style="left:1405.2px;top:464.3px;line-height:20px;color:#fff;letter-spacing:-0.14px;width:120.8px;overflow:hidden;">GroupNameString</div><div style="left:1526px;top:465px;width:178px;height:17.6px;background:#363636"></div><div class="t" style="left:1528.5px;top:463.6px;line-height:20px;color:#fff;letter-spacing:-0.37px;">None</div><div class="t" style="left:1405.2px;top:484.3px;line-height:20px;color:#868686;width:120.8px;overflow:hidden;">HasStreamingBundle</div><div style="left:1526px;top:487.7px;width:12px;height:11.7px;background:#636363;border:1px solid #2e2e2e;border-right-color:#3a3a3a"></div><div class="t" style="left:1405.2px;top:506px;line-height:20px;color:#fff;letter-spacing:-0.14px;width:120.8px;overflow:hidden;">LoadMode</div><div style="left:1526px;top:507.8px;width:178px;height:17.3px;background:#363636"></div><div class="t" style="left:1528.5px;top:506.25000000000006px;line-height:20px;color:#fff;letter-spacing:-0.73px;">POSITION</div><div style="left:1526px;top:507px;width:178px;height:1px;background:#363636"></div><div style="left:1684px;top:507px;width:19.800px;height:16.800px;background:#000"></div><div style="left:1685px;top:508px;width:17px;height:13px;background:#747474;border:1px solid #868686"></div><svg style="left:1684px;top:507px;" width="20" height="17" viewBox="0 0 20 17"><path d="M4.700,4.800h10.500l-5.250,5.700z" fill="#000"/></svg><div style="left:1376.3px;top:534.7px;width:376px;height:22px;background:#393939"></div><svg style="left:1379px;top:540.2px;" width="15" height="10" viewBox="0 0 15 10"><path d="M0,.6h14.200l-7.100,8.700z" fill="#8e8e8e"/></svg><div class="t" style="left:1401.3px;top:535.7px;line-height:20px;color:#fff;letter-spacing:-0.07px;">Actor</div><div class="t" style="left:1405.2px;top:560.1px;line-height:20px;color:#fff;letter-spacing:-0.06px;width:120.8px;overflow:hidden;">StringTag</div><div style="left:1526px;top:561.2px;width:178px;height:17.5px;background:#363636"></div><div class="t" style="left:1528.5px;top:559.75px;line-height:20px;color:#fff;letter-spacing:-0.37px;">None</div><div class="t" style="left:1405.2px;top:580.2px;line-height:20px;color:#fff;width:120.8px;overflow:hidden;">FindCameraComponent</div><div style="left:1525.500px;top:583.200px;width:12.500px;height:12.200px;background:#c9c9c9;border-top:1px solid #3a3a3a;border-left:1px solid #3a3a3a"></div><svg style="left:1526px;top:583.5px;" width="12" height="12" viewBox="0 0 12 12"><path d="M1.500,5.200l2.600,4.600l6.400,-8.600" fill="none" stroke="#4a4a4a" stroke-width="1.100"/></svg><div style="left:1376.3px;top:603px;width:376px;height:22px;background:#393939"></div><svg style="left:1379px;top:608.5px;" width="15" height="10" viewBox="0 0 15 10"><path d="M0,.6h14.200l-7.100,8.700z" fill="#8e8e8e"/></svg><div class="t" style="left:1401.3px;top:604px;line-height:20px;color:#fff;letter-spacing:-0.11px;">Render</div><div class="t" style="left:1405.2px;top:628px;line-height:20px;color:#fff;letter-spacing:0.08px;width:120.8px;overflow:hidden;">Hidden</div><div style="left:1525.500px;top:631px;width:12.500px;height:12.200px;background:#c9c9c9;border-top:1px solid #3a3a3a;border-left:1px solid #3a3a3a"></div><div style="left:1376.3px;top:651px;width:376px;height:22px;background:#393939"></div><svg style="left:1379px;top:656.5px;" width="15" height="10" viewBox="0 0 15 10"><path d="M0,.6h14.200l-7.100,8.700z" fill="#8e8e8e"/></svg><div class="t" style="left:1401.3px;top:652px;line-height:20px;color:#fff;letter-spacing:0.31px;">Update</div><div class="t" style="left:1405.2px;top:676.3px;line-height:20px;color:#fff;width:120.8px;overflow:hidden;">AllowUpdateBeforeBegin</div><div style="left:1525.500px;top:679px;width:12.500px;height:12.200px;background:#c9c9c9;border-top:1px solid #3a3a3a;border-left:1px solid #3a3a3a"></div><div style="left:1376.3px;top:699px;width:376px;height:22px;background:#393939"></div><svg style="left:1379px;top:704.5px;" width="15" height="10" viewBox="0 0 15 10"><path d="M0,.6h14.200l-7.100,8.700z" fill="#8e8e8e"/></svg><div class="t" style="left:1401.3px;top:700px;line-height:20px;color:#fff;letter-spacing:0.42px;">Input</div><div class="t" style="left:1405.2px;top:723.8px;line-height:20px;color:#fff;letter-spacing:0.28px;width:120.8px;overflow:hidden;">InputPriority</div><div style="left:1526px;top:725.2px;width:163.7px;height:17.6px;background:#363636"></div><div style="left:1526px;top:725.2px;width:82px;height:17.6px;background:#696969"></div><div class="t" style="left:1528.5px;top:724.3px;line-height:20px;color:#fff;">0</div><svg style="left:1693px;top:727px;" width="10" height="14" viewBox="0 0 10 14"><path d="M2,4.400l2.800,-2.800l2.800,2.800zM2,9.800l2.800,2.800l2.800,-2.800z" fill="#d8d8d8"/><path d="M2,4.900h5.600M2,9.300h5.600" stroke="#2a2a2a" stroke-width=".8"/></svg><div style="left:1376.3px;top:745px;width:376px;height:22px;background:#393939"></div><svg style="left:1379px;top:750.5px;" width="15" height="10" viewBox="0 0 15 10"><path d="M0,.6h14.200l-7.100,8.700z" fill="#8e8e8e"/></svg><div class="t" style="left:1405.2px;top:770.2px;line-height:20px;color:#868686;letter-spacing:0.11px;width:120.8px;overflow:hidden;">FolderPath</div><div style="left:1526px;top:770.9px;width:178px;height:17.9px;background:#5a5a5a"></div>
<div class="t" style="left:3px;top:990.0px;line-height:20px;height:20px;color:#e8e8e8;letter-spacing:-0.23px;">Mouse Location:</div>
<div class="t" style="left:382.3px;top:990.0px;line-height:20px;height:20px;color:#e8e8e8;letter-spacing:-0.05px;">Camera Location:X:0.8, Y:2.3, Z:-3.9</div>
<div class="t" style="left:688.6px;top:989.5px;line-height:20px;height:20px;color:#e8e8e8;letter-spacing:-0.26px;">Mouse Distance:</div>
</body></html>
